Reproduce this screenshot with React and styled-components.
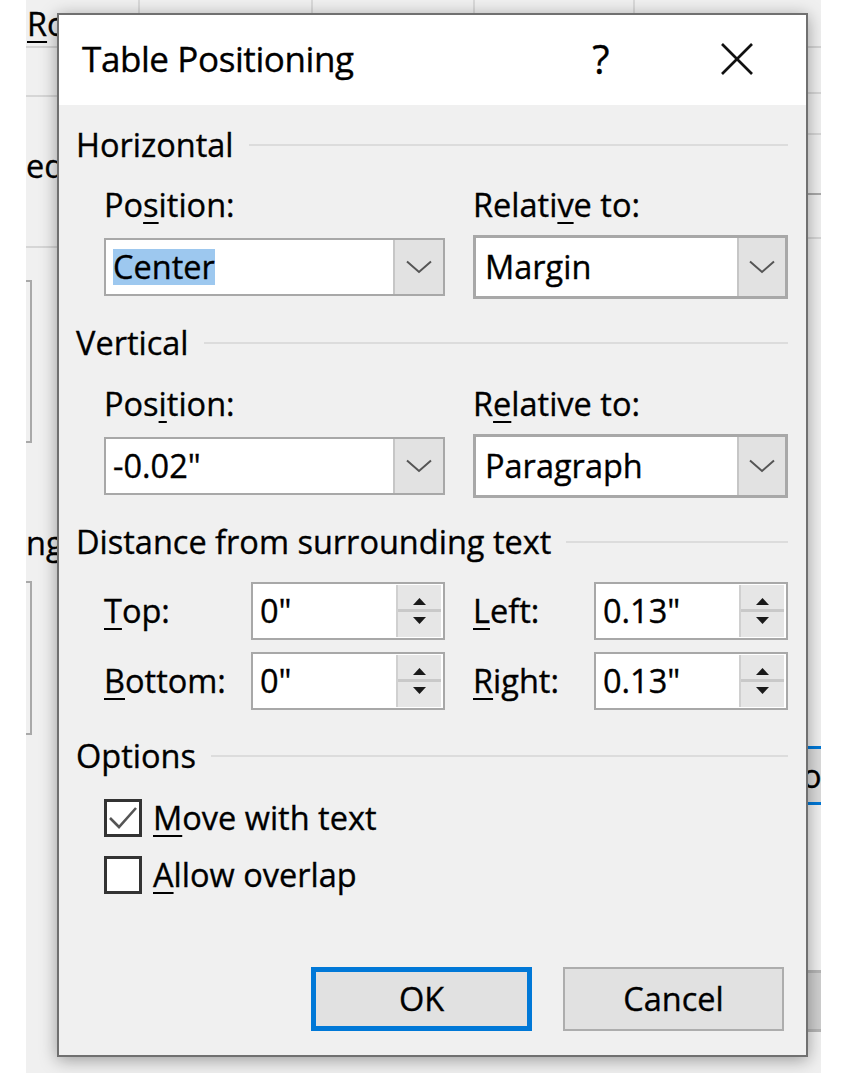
import React from "react";
import styled, { createGlobalStyle } from "styled-components";

const Global = createGlobalStyle`
  html, body { margin: 0; padding: 0; background: #ffffff; }
  body { font-family: "Open Sans", "Noto Sans", sans-serif; color: #000; }
  * { box-sizing: border-box; }
`;

const Page = styled.div`
  width: 856px;
  height: 1085px;
  background: #ffffff;
  padding-left: 26px;
  overflow: hidden;
`;

const Backdrop = styled.div`
  position: relative;
  width: 795px;
  height: 1073px;
  background: #f0f0f0;
  overflow: hidden;
  display: flex;
  flex-direction: column;
  font-size: 32.5px;
  line-height: 44px;
  -webkit-text-stroke: 0.35px #000;
`;

const TabRow = styled.div`
  display: flex;
  height: 48px;
  flex-shrink: 0;
  border-bottom: 2px solid #d4d4d4;
`;

const Tab = styled.div`
  width: ${(p) => p.$w}px;
  padding-left: ${(p) => p.$pl}px;
  padding-top: 2px;
  border-right: 2px solid #d9d9d9;
  white-space: nowrap;
  overflow: hidden;
`;

const ContentRow = styled.div`
  flex: 1;
  display: flex;
`;

const Strip = styled.div`
  width: ${(p) => p.$w}px;
  display: flex;
  flex-direction: column;
  flex-shrink: 0;
`;

const Gap = styled.div`
  flex: 1;
`;

const StripCell = styled.div`
  height: ${(p) => p.$h}px;
  border-bottom: 2px solid ${(p) => p.$line || "#d6d6d6"};
  padding-top: ${(p) => p.$pt || 0}px;
  text-align: right;
  white-space: nowrap;
`;

const StripText = styled.div`
  margin-top: ${(p) => p.$mt}px;
  text-align: right;
  white-space: nowrap;
`;

const GhostBox = styled.div`
  margin-top: ${(p) => p.$mt}px;
  margin-left: -20px;
  width: 26px;
  height: ${(p) => p.$h}px;
  border: 2px solid #a9a9a9;
  flex-shrink: 0;
`;

const GhostButton = styled.div`
  margin-top: ${(p) => p.$mt}px;
  height: ${(p) => p.$h}px;
  flex-shrink: 0;
  background: ${(p) => (p.$focus ? "#dcdcdc" : "#cfcfcf")};
  border-top: 3px solid ${(p) => (p.$focus ? "#0078d7" : "#b5b5b5")};
  border-bottom: 3px solid ${(p) => (p.$focus ? "#0078d7" : "#b5b5b5")};
  display: flex;
  align-items: center;
  overflow: hidden;
  white-space: nowrap;
`;

const GhostLabel = styled.span`
  margin-left: -6px;
`;

const Key = styled.span`
  text-decoration: underline;
  text-decoration-thickness: 2px;
  text-underline-offset: 5px;
`;

/* ---------- dialog ---------- */

const Dialog = styled.div`
  position: absolute;
  left: 31px;
  top: 13px;
  width: 751px;
  height: 1044px;
  border: 2px solid #707070;
  background: #f0f0f0;
  box-shadow: 0 3px 16px rgba(0, 0, 0, 0.36);
  display: flex;
  flex-direction: column;
`;

const TitleBar = styled.div`
  height: 90px;
  flex-shrink: 0;
  background: #ffffff;
  display: flex;
  align-items: center;
  padding: 0 24px 3px 23px;
`;

const Title = styled.div`
  flex: 1;
  font-size: 35px;
  letter-spacing: -0.4px;
  line-height: 48px;
`;

const HelpGlyph = styled.div`
  width: 90px;
  text-align: center;
  font-size: 40px;
  line-height: 48px;
`;

const CloseGlyph = styled.div`
  width: 90px;
  margin-left: 46px;
  display: flex;
  align-items: center;
  justify-content: center;
`;

const Body = styled.div`
  flex: 1;
  display: flex;
  flex-direction: column;
  padding: 18px 18px 24px 17px;
`;

const GroupHeader = styled.div`
  display: flex;
  align-items: center;
  height: 44px;
  margin-top: ${(p) => p.$mt || 0}px;
  white-space: nowrap;
`;

const GroupRule = styled.div`
  flex: 1;
  height: 2px;
  background: #dcdcdc;
  margin-left: 15px;
`;

const FieldGrid = styled.div`
  display: grid;
  grid-template-columns: 341px 315px;
  grid-auto-rows: ${(p) => p.$rows};
  column-gap: 28px;
  row-gap: ${(p) => p.$rowGap}px;
  align-items: center;
  margin-left: 28px;
  margin-top: ${(p) => p.$mt}px;
`;

const FieldLabel = styled.div`
  white-space: nowrap;
  align-self: end;
`;

const Combo = styled.div`
  display: flex;
  height: ${(p) => p.$h}px;
  background: #ffffff;
  border: ${(p) => (p.$list ? "3px" : "2px")} solid #a8a8a8;
`;

const ComboText = styled.div`
  flex: 1;
  display: flex;
  align-items: center;
  padding-left: ${(p) => p.$pl}px;
  white-space: nowrap;
`;

const Selected = styled.span`
  background: #9dc8ef;
  line-height: 36px;
`;

const ComboButton = styled.div`
  width: ${(p) => (p.$list ? 48 : 50)}px;
  background: #e2e2e2;
  border-left: 2px solid #c6c6c6;
  display: flex;
  align-items: center;
  justify-content: center;
`;

const SpinCell = styled.div`
  display: flex;
  align-items: center;
  height: 100%;
`;

const SpinLabel = styled.div`
  flex: 1;
  white-space: nowrap;
`;

const Spinner = styled.div`
  width: 194px;
  height: 100%;
  display: flex;
  background: #ffffff;
  border: 2px solid #a8a8a8;
`;

const SpinText = styled.div`
  flex: 1;
  display: flex;
  align-items: center;
  padding-left: 7px;
`;

const SpinButtons = styled.div`
  width: 45px;
  margin: 1px 2px 1px 0;
  display: flex;
  flex-direction: column;
  border-left: 2px solid #d0d0d0;
`;

const SpinHalf = styled.div`
  flex: 1;
  background: #e6e6e6;
  display: flex;
  justify-content: center;
  align-items: ${(p) => (p.$up ? "flex-end" : "flex-start")};
  padding: ${(p) => (p.$up ? "0 0 4px" : "5px 0 0")};
  border-bottom: ${(p) => (p.$up ? "3px solid #c9c9c9" : "none")};
`;

const CheckList = styled.div`
  display: flex;
  flex-direction: column;
  gap: 13px;
  margin-top: 18px;
  margin-left: 28px;
`;

const CheckRow = styled.div`
  display: flex;
  align-items: center;
  gap: 11px;
  height: 44px;
`;

const CheckBox = styled.div`
  width: 38px;
  height: 38px;
  border: 3px solid #333333;
  background: #ffffff;
  display: flex;
  align-items: center;
  justify-content: center;
`;

const ButtonRow = styled.div`
  margin-top: auto;
  margin-right: 4px;
  display: flex;
  justify-content: flex-end;
  gap: 31px;
`;

const DialogButton = styled.div`
  width: 221px;
  height: 64px;
  background: #e1e1e1;
  border: ${(p) => (p.$default ? "5px solid #0078d7" : "2px solid #adadad")};
  display: flex;
  align-items: center;
  justify-content: center;
`;

const Chevron = () => (
  <svg width="26" height="14" viewBox="0 0 26 14">
    <polyline points="1,1.5 13,12 25,1.5" fill="none" stroke="#555" strokeWidth="2" />
  </svg>
);

const UpArrow = () => (
  <svg width="13" height="7" viewBox="0 0 13 7">
    <polygon points="0,7 6.5,0 13,7" fill="#1a1a1a" />
  </svg>
);

const DownArrow = () => (
  <svg width="13" height="7" viewBox="0 0 13 7">
    <polygon points="0,0 6.5,7 13,0" fill="#1a1a1a" />
  </svg>
);

const CloseIcon = () => (
  <svg width="32" height="32" viewBox="0 0 32 32">
    <line x1="1" y1="1" x2="31" y2="31" stroke="#111" strokeWidth="2.6" />
    <line x1="31" y1="1" x2="1" y2="31" stroke="#111" strokeWidth="2.6" />
  </svg>
);

const CheckMark = () => (
  <svg width="30" height="26" viewBox="0 0 30 26">
    <polyline points="2,13 11,22 28,3" fill="none" stroke="#555" strokeWidth="2.6" />
  </svg>
);

const SpinField = ({ value }) => (
  <Spinner>
    <SpinText>{value}</SpinText>
    <SpinButtons>
      <SpinHalf $up>
        <UpArrow />
      </SpinHalf>
      <SpinHalf>
        <DownArrow />
      </SpinHalf>
    </SpinButtons>
  </Spinner>
);

export default function App() {
  return (
    <Page>
      <Global />
      <Backdrop>
        <TabRow>
          <Tab $w={114} $pl={1}>
            <Key>R</Key>o
          </Tab>
          <Tab $w={173} />
          <Tab $w={162} />
          <Tab $w={160} />
        </TabRow>
        <ContentRow>
          <Strip $w={31}>
            <StripCell $h={49} />
            <StripCell $h={151} $pt={47}>
              ed
            </StripCell>
            <GhostBox $mt={32} $h={163} />
            <StripText $mt={78}>
              n<Key>g</Key>
            </StripText>
            <GhostBox $mt={16} $h={154} />
          </Strip>
          <Gap />
          <Strip $w={13}>
            <StripCell $h={46} />
            <StripCell $h={41} />
            <StripCell $h={60} $line="#a9a9a9" />
            <StripCell $h={44} />
            <GhostButton $mt={507} $h={59} $focus>
              <GhostLabel>o</GhostLabel>
            </GhostButton>
            <GhostButton $mt={165} $h={62} />
          </Strip>
        </ContentRow>

        <Dialog>
          <TitleBar>
            <Title>Table Positioning</Title>
            <HelpGlyph>?</HelpGlyph>
            <CloseGlyph>
              <CloseIcon />
            </CloseGlyph>
          </TitleBar>
          <Body>
            <GroupHeader>
              Horizontal
              <GroupRule />
            </GroupHeader>
            <FieldGrid $mt={16} $rows="44px 64px" $rowGap={8}>
              <FieldLabel>
                Po<Key>s</Key>ition:
              </FieldLabel>
              <FieldLabel>
                Relati<Key>v</Key>e to:
              </FieldLabel>
              <Combo $h={58}>
                <ComboText $pl={7}>
                  <Selected>Center</Selected>
                </ComboText>
                <ComboButton>
                  <Chevron />
                </ComboButton>
              </Combo>
              <Combo $h={64} $list>
                <ComboText $pl={9}>Margin</ComboText>
                <ComboButton $list>
                  <Chevron />
                </ComboButton>
              </Combo>
            </FieldGrid>

            <GroupHeader $mt={22}>
              Vertical
              <GroupRule />
            </GroupHeader>
            <FieldGrid $mt={17} $rows="44px 64px" $rowGap={8}>
              <FieldLabel>
                Pos<Key>i</Key>tion:
              </FieldLabel>
              <FieldLabel>
                R<Key>e</Key>lative to:
              </FieldLabel>
              <Combo $h={58}>
                <ComboText $pl={7}>-0.02"</ComboText>
                <ComboButton>
                  <Chevron />
                </ComboButton>
              </Combo>
              <Combo $h={64} $list>
                <ComboText $pl={9}>Paragraph</ComboText>
                <ComboButton $list>
                  <Chevron />
                </ComboButton>
              </Combo>
            </FieldGrid>

            <GroupHeader $mt={22}>
              Distance from surrounding text
              <GroupRule />
            </GroupHeader>
            <FieldGrid $mt={18} $rows="58px" $rowGap={12}>
              <SpinCell>
                <SpinLabel>
                  <Key>T</Key>op:
                </SpinLabel>
                <SpinField value={'0"'} />
              </SpinCell>
              <SpinCell>
                <SpinLabel>
                  <Key>L</Key>eft:
                </SpinLabel>
                <SpinField value={'0.13"'} />
              </SpinCell>
              <SpinCell>
                <SpinLabel>
                  <Key>B</Key>ottom:
                </SpinLabel>
                <SpinField value={'0"'} />
              </SpinCell>
              <SpinCell>
                <SpinLabel>
                  <Key>R</Key>ight:
                </SpinLabel>
                <SpinField value={'0.13"'} />
              </SpinCell>
            </FieldGrid>

            <GroupHeader $mt={24}>
              Options
              <GroupRule />
            </GroupHeader>
            <CheckList>
              <CheckRow>
                <CheckBox>
                  <CheckMark />
                </CheckBox>
                <span>
                  <Key>M</Key>ove with text
                </span>
              </CheckRow>
              <CheckRow>
                <CheckBox />
                <span>
                  <Key>A</Key>llow overlap
                </span>
              </CheckRow>
            </CheckList>

            <ButtonRow>
              <DialogButton $default>OK</DialogButton>
              <DialogButton>Cancel</DialogButton>
            </ButtonRow>
          </Body>
        </Dialog>
      </Backdrop>
    </Page>
  );
}
